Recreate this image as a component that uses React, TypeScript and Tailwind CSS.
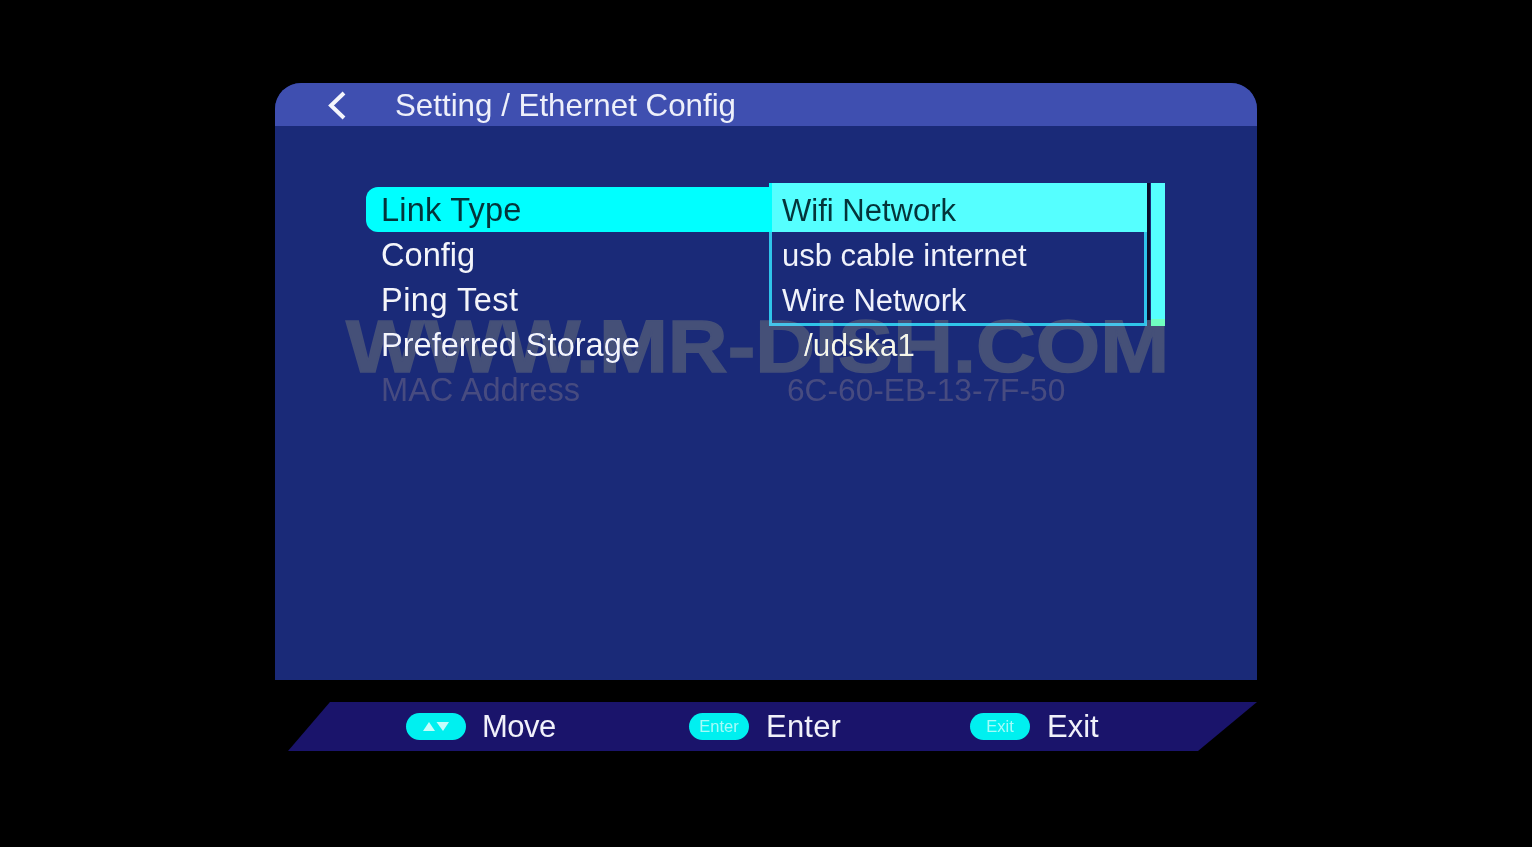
import React from 'react';

const rows = [
  { label: 'Link Type', active: true, labelClass: 'tracking-[0.2px]' },
  { label: 'Config' },
  { label: 'Ping Test', labelClass: 'tracking-[0.45px]' },
  { label: 'Preferred Storage', value: '/udska1', valueClass: 'pl-[34px]' },
  { label: 'MAC Address', value: '6C-60-EB-13-7F-50', valueClass: 'pl-[17px]', dim: true },
];

const options = ['Wifi Network', 'usb cable internet', 'Wire Network'];

const Pill = ({ children }: { children: React.ReactNode }) => (
  <span className="flex h-[27px] w-[60px] items-center justify-center rounded-full bg-[#00f0f0] text-[16.5px] text-[#a5fbf8]">
    {children}
  </span>
);

const FooterItem = ({ pill, label, labelClass }: { pill: React.ReactNode; label: string; labelClass: string }) => (
  <div className="flex items-center gap-4">
    <Pill>{pill}</Pill>
    <span className={`text-[31px] leading-none text-[#f1f1fa] ${labelClass}`}>{label}</span>
  </div>
);

export default function App() {
  return (
    <div className="h-[847px] w-[1532px] overflow-hidden bg-black pl-[275px] pt-[83px] font-['Liberation_Sans',Arial,sans-serif]">
      <div className="relative w-[982px]">
        <div className="flex h-[597px] flex-col overflow-hidden rounded-t-[26px] bg-[#1a2a78]">
          {/* Title bar */}
          <div className="flex h-[43px] items-center bg-[#3f4fb0] pl-[52px]">
            <svg width="20" height="30" viewBox="0 0 20 30" fill="none">
              <path d="M17 3 L4 15.5 L17 28" stroke="#f4f5fc" strokeWidth="4" />
            </svg>
            <span className="ml-[48px] pt-[2px] text-[31.3px] leading-none text-[#eef0fa]">Setting / Ethernet Config</span>
          </div>

          {/* Settings list */}
          <div className="ml-[91px] mt-[61px] w-[404px]">
            {rows.map(row => (
              <div
                key={row.label}
                className={`flex h-[45px] items-center whitespace-nowrap pl-[15px] pt-[2px] leading-none ${
                  row.active ? 'rounded-l-[12px] bg-[#00ffff] text-[#04343a]' : row.dim ? 'text-[#474b80]' : 'text-[#f4f5fa]'
                }`}
              >
                <span className={`w-[389px] shrink-0 text-[32.6px] ${row.labelClass ?? ''}`}>{row.label}</span>
                {row.value && <span className={row.dim ? `${row.valueClass} text-[31.7px] text-[#474b80]` : `${row.valueClass} text-[31.7px] text-[#f6f7e8]`}>{row.value}</span>}
              </div>
            ))}
          </div>
        </div>

        {/* Dropdown over the list */}
        <div className="absolute left-[494px] top-[100px] flex h-[143px] items-stretch">
          <div className="w-[378px] border-[3px] border-t-0 border-[#2fc4ea] bg-[#1a2a78]">
            {options.map((opt, i) => (
              <div
                key={opt}
                className={`flex items-center text-[31px] leading-none ${
                  i === 0
                    ? '-mx-[3px] h-[49px] border-l-[3px] border-[#00ffff] bg-[#55ffff] pl-[10px] pt-[6px] text-[#04343a]'
                    : i === 2
                      ? 'h-[45px] pl-[10px] pt-[2px] tracking-[-0.15px] text-[#f0f2fb]'
                      : 'h-[45px] pl-[10px] pt-[2px] text-[#f0f2fb]'
                }`}
              >
                {opt}
              </div>
            ))}
          </div>
          <div className="w-[3px] bg-[#0a0f2a]" />
          <div className="ml-px flex w-[14px] flex-col">
            <div className="flex-1 bg-[#55ffff]" />
            <div className="h-[7px] bg-[#70ffc0]" />
          </div>
        </div>

        {/* Watermark */}
        <div className="pointer-events-none absolute left-[71px] top-[226px] origin-left scale-x-[1.104] whitespace-nowrap text-[75px] font-bold leading-none text-[#45506f] mix-blend-lighten [-webkit-text-stroke:1.5px_#45506f]">
          WWW.MR-DISH.COM
        </div>

        {/* Key hints */}
        <div className="ml-[13px] mt-[22px] grid h-[49px] w-[969px] grid-cols-[283px_281px_1fr] items-center bg-[#1a146b] pl-[118px] [clip-path:polygon(42px_0,100%_0,910px_100%,0_100%)]">
          <FooterItem
            label="Move"
            labelClass="tracking-[-0.5px]"
            pill={
              <svg width="28" height="12" viewBox="0 0 28 12" fill="#c5fdfb">
                <path d="M1 10 L7 1 L13 10 Z" />
                <path d="M14.5 1 L27 1 L21 10 Z" />
              </svg>
            }
          />
          <FooterItem label="Enter" labelClass="ml-px tracking-[0.2px]" pill="Enter" />
          <FooterItem label="Exit" labelClass="ml-px" pill="Exit" />
        </div>
      </div>
    </div>
  );
}
